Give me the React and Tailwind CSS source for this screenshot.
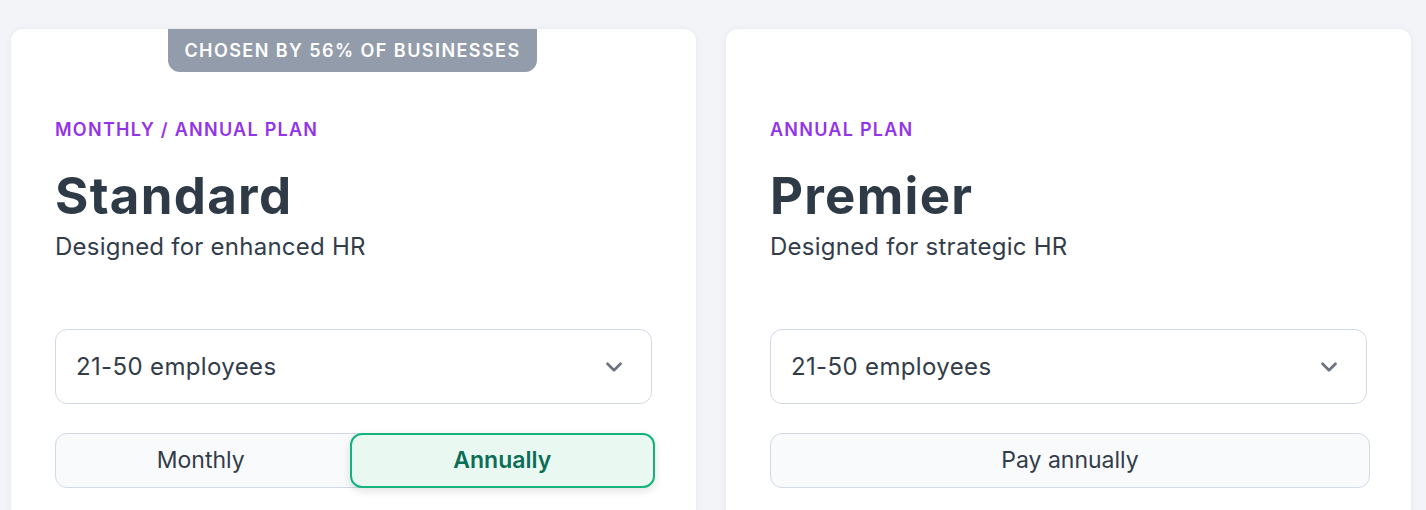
import React, { useState } from "react";
import { ChevronDown } from "lucide-react";

const plans = [
  {
    id: "standard",
    label: "Monthly / Annual plan",
    name: "Standard",
    blurb: "Designed for enhanced HR",
    badge: "Chosen by 56% of businesses",
    toggle: true,
  },
  {
    id: "premier",
    label: "Annual plan",
    name: "Premier",
    blurb: "Designed for strategic HR",
    toggle: false,
  },
];

function PlanCard({ plan }) {
  const [billing, setBilling] = useState("annually");

  return (
    <div className="relative w-[685px] h-[500px] shrink-0 rounded-xl bg-white px-11 pt-[89px] shadow-[0_0_6px_rgba(15,23,42,0.06)]">
      {plan.badge ? (
        <div className="absolute left-[157px] top-0 flex h-[43px] w-[369px] items-center justify-center rounded-b-xl bg-[#939cab] text-[18px] font-semibold uppercase tracking-[0.08em] text-white">
          {plan.badge}
        </div>
      ) : null}

      <p className="text-[18px] font-semibold uppercase leading-6 tracking-[0.07em] text-[#9333ea]">
        {plan.label}
      </p>
      <h2 className="mt-7 text-[51px] font-bold leading-[51px] tracking-[0.025em] text-[#2f3a47]">
        {plan.name}
      </h2>
      <p className="mt-[10px] text-[24px] leading-8 tracking-[0.01em] text-[#333d4a]">
        {plan.blurb}
      </p>

      <button className="mt-[66px] flex h-[75px] w-full items-center justify-between rounded-xl border border-[#d3d9e4] bg-white pl-5 pr-6 text-[24px] tracking-[0.015em] text-[#333d4a]">
        21-50 employees
        <ChevronDown className="h-[26px] w-[26px] text-[#6b7280]" strokeWidth={2.5} />
      </button>

      {plan.toggle ? (
        <div className="mt-[29px] grid h-[55px] grid-cols-2 rounded-xl border border-[#d3d9e4] bg-[#f9fafb] text-[23px]">
          <button
            onClick={() => setBilling("monthly")}
            className={
              billing === "monthly"
                ? "-my-px rounded-xl border-2 border-[#14b37d] bg-[#e9f9f1] font-semibold text-[#0d6e58] shadow-md"
                : "pr-2 text-[#333d4a]"
            }
          >
            Monthly
          </button>
          <button
            onClick={() => setBilling("annually")}
            className={
              billing === "annually"
                ? "-my-px -mr-1 -ml-1 rounded-xl border-2 border-[#14b37d] bg-[#e9f9f1] font-semibold text-[#0d6e58] shadow-[0_3px_8px_rgba(0,0,0,0.12)]"
                : "text-[#333d4a]"
            }
          >
            Annually
          </button>
        </div>
      ) : (
        <button className="mt-[29px] h-[55px] w-[600px] rounded-xl border border-[#d3d9e4] bg-[#f9fafb] text-[23px] text-[#333d4a]">
          Pay annually
        </button>
      )}
    </div>
  );
}

export default function App() {
  return (
    <div
      className="min-h-[510px] overflow-hidden bg-[#f3f4f7] pl-[11px] pt-[29px]"
      style={{ fontFamily: "Inter, 'Noto Sans', sans-serif" }}
    >
      <div className="flex gap-[30px]">
        {plans.map((p) => (
          <PlanCard key={p.id} plan={p} />
        ))}
      </div>
    </div>
  );
}
